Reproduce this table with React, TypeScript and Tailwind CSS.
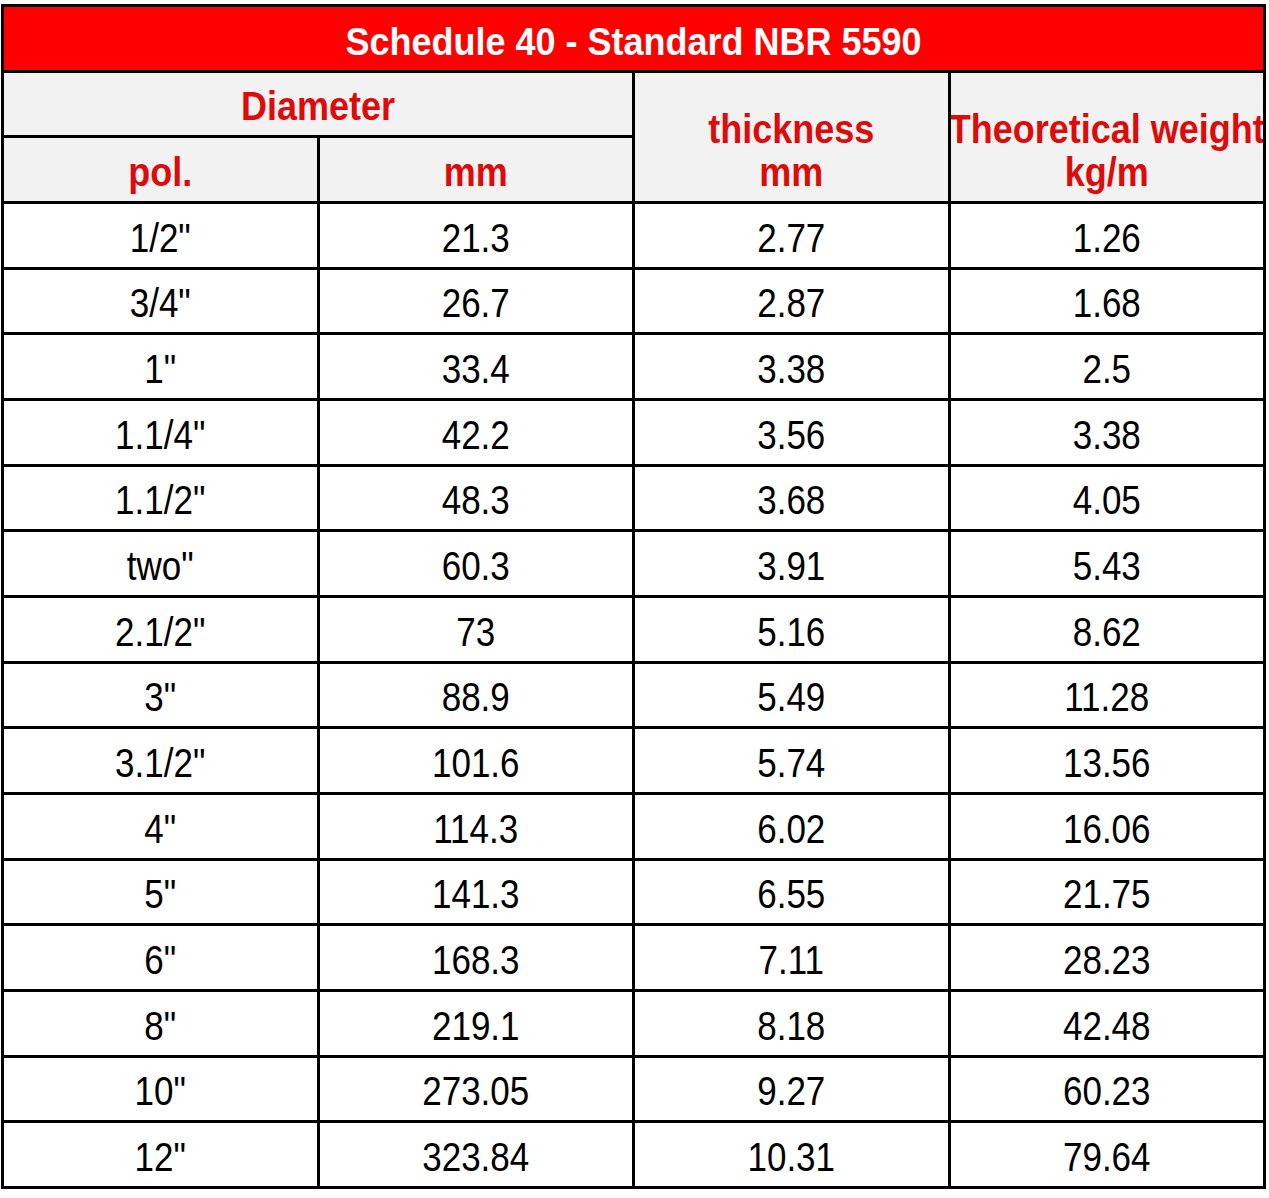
const rows: [string, string, string, string][] = [
  ['1/2"', '21.3', '2.77', '1.26'],
  ['3/4"', '26.7', '2.87', '1.68'],
  ['1"', '33.4', '3.38', '2.5'],
  ['1.1/4"', '42.2', '3.56', '3.38'],
  ['1.1/2"', '48.3', '3.68', '4.05'],
  ['two"', '60.3', '3.91', '5.43'],
  ['2.1/2"', '73', '5.16', '8.62'],
  ['3"', '88.9', '5.49', '11.28'],
  ['3.1/2"', '101.6', '5.74', '13.56'],
  ['4"', '114.3', '6.02', '16.06'],
  ['5"', '141.3', '6.55', '21.75'],
  ['6"', '168.3', '7.11', '28.23'],
  ['8"', '219.1', '8.18', '42.48'],
  ['10"', '273.05', '9.27', '60.23'],
  ['12"', '323.84', '10.31', '79.64'],
];

// source image is slightly stretched vertically, so the glyphs get a small scale-y
const tall = 'inline-block scale-y-[1.12] origin-bottom';
const text = 'bg-[#f2f2f2] text-[#de0b0b] font-bold text-[36px] leading-[43px] pb-[5px] overflow-hidden whitespace-nowrap';
const head = `${text} flex items-end justify-center`;
const head2 = `${text} row-span-2 flex flex-col justify-end items-center`;

export default function App() {
  return (
    <div className="bg-white min-h-[1198px] pt-1 pl-px" style={{ fontFamily: '"Liberation Sans", Arial, sans-serif' }}>
      <div className="w-[1265px] h-[1185px] bg-black p-[3px] grid grid-cols-4 grid-rows-[repeat(18,minmax(0,1fr))] gap-[3px]">
        <div className="col-span-4 bg-[#ff0000] text-white font-bold text-[36px] leading-[43px] flex items-end justify-center pb-[5px]">
          <span className="inline-block scale-y-[1.08] origin-bottom">Schedule 40 - Standard NBR 5590</span>
        </div>
        <div className={`col-span-2 ${head}`}>
          <span className={tall}>Diameter</span>
        </div>
        <div className={head2}>
          <span className={tall}>thickness</span>
          <span className={tall}>mm</span>
        </div>
        <div className={head2}>
          <span className={tall}>Theoretical weight</span>
          <span className={tall}>kg/m</span>
        </div>
        <div className={head}>
          <span className={tall}>pol.</span>
        </div>
        <div className={head}>
          <span className={tall}>mm</span>
        </div>
        {rows.map((r) =>
          r.map((v, i) => (
            <div
              key={r[0] + i}
              className="bg-white text-black text-[35px] leading-[40px] flex items-end justify-center pb-[6px]"
            >
              <span className="inline-block scale-y-[1.15] origin-bottom">{v}</span>
            </div>
          ))
        )}
      </div>
    </div>
  );
}
